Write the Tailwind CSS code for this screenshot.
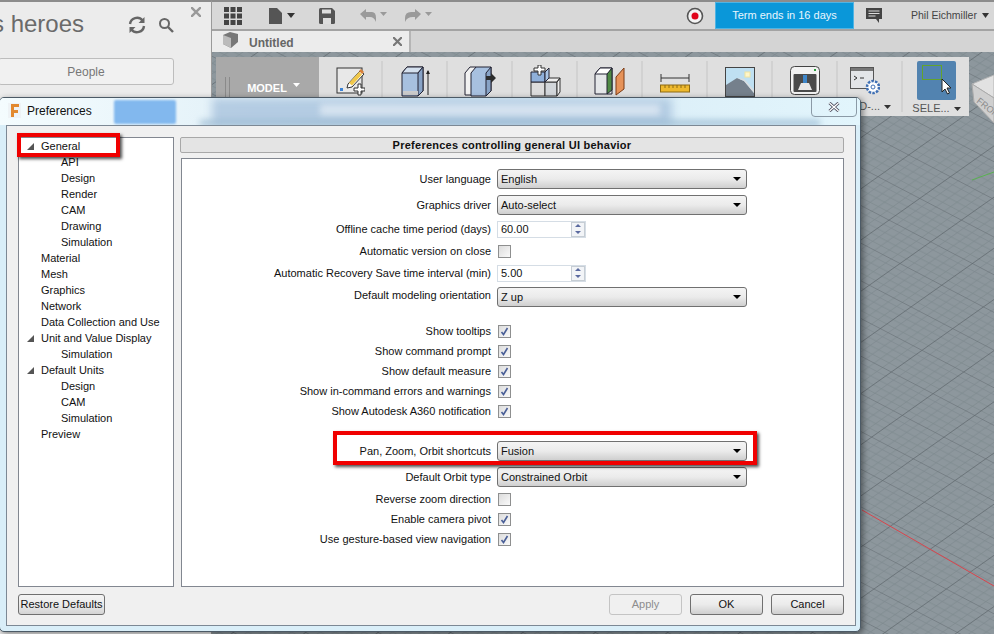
<!DOCTYPE html>
<html lang="en">

<head>
    <meta charset="UTF-8" />
    <title>Preferences</title>
    <script src="https://cdn.jsdelivr.net/npm/@tailwindcss/browser@4"></script>
</head>

<body class="m-0 overflow-hidden font-['Liberation_Sans',Arial,sans-serif]">
    <div class="relative w-[994px] h-[634px] overflow-hidden flex bg-[#8d979d]">

        <!-- Left data panel -->
        <div class="w-[212px] h-full bg-[#ececec] border-t-2 border-[#8c8c8c] border-r border-r-[#9a9a9a] shrink-0 overflow-hidden">
            <div class="h-[56px] flex items-center relative">
                <span class="ml-[-8px] mt-[-13px] text-[24px] leading-none text-[#6a6a6a] whitespace-nowrap w-[134px] shrink-0">s heroes</span>
                <svg class="mt-[-10px] w-[18px] h-[18px] ml-[2px]" viewBox="0 0 18 18" fill="none" stroke="#666" stroke-width="2.4">
                    <path d="M2 8 A7 7 0 0 1 14.5 4.5" />
                    <path d="M16 10 A7 7 0 0 1 3.5 13.5" />
                    <path d="M16.5 1v6h-6z M1.5 17v-6h6z" fill="#666" stroke="none" />
                </svg>
                <svg class="mt-[-10px] w-[16px] h-[16px] ml-[12px]" viewBox="0 0 16 16" fill="none" stroke="#666" stroke-width="2">
                    <circle cx="6.5" cy="6.5" r="4.5" />
                    <path d="M10 10l5 5" stroke-width="2.4" />
                </svg>
                <svg class="absolute left-[191px] top-[5px] w-[10px] h-[10px]" viewBox="0 0 10 10" stroke="#999" stroke-width="2.4">
                    <path d="M0 0l10 10M10 0L0 10" />
                </svg>
            </div>
            <div class="ml-[-2px] w-[176px] h-[27px] bg-[#f1f1f1] border border-[#bdbdbd] rounded-[3px] flex items-center justify-center text-[12px] text-[#777]">People</div>
        </div>

        <!-- App area -->
        <div class="relative flex-1 flex flex-col">
            <!-- Top bar -->
            <div class="h-[31px] bg-[#d8d8d8] border-t-2 border-t-[#8c8c8c] border-b-2 border-b-[#a3a3a3] flex items-center shrink-0">
                <svg class="ml-[12px] w-[18px] h-[18px]" viewBox="0 0 18 18" fill="#444">
                    <path d="M0 0h5v5H0zM6.500 0h5v5h-5zM13 0h5v5h-5zM0 6.500h5v5H0zM6.500 6.500h5v5h-5zM13 6.500h5v5h-5zM0 13h5v5H0zM6.500 13h5v5h-5zM13 13h5v5h-5z" />
                </svg>
                <svg class="ml-[27px] w-[26px] h-[16px]" viewBox="0 0 26 16" fill="#555">
                    <path d="M0 0h8l5 5v11H0z" />
                    <path d="M18 5h8l-4 5z" fill="#333" />
                </svg>
                <svg class="ml-[24px] w-[16px] h-[16px]" viewBox="0 0 16 16" fill="#555">
                    <path d="M0 1.500Q0 0 1.500 0H13l3 3v11.500Q16 16 14.500 16h-13Q0 16 0 14.500z" />
                    <path d="M3 1.500h9v4H3z" fill="#ddd" />
                    <path d="M4 10h8v6H4z" fill="#ddd" />
                </svg>
                <svg class="ml-[25px] w-[28px] h-[14px]" viewBox="0 0 28 14" fill="#9a9a9a">
                    <path d="M0 5l6-5v3h6q4 0 4 6v4q-2-5-6-5H6v3z" />
                    <path d="M20 3h7l-3.500 4z" />
                </svg>
                <svg class="ml-[17px] w-[28px] h-[14px]" viewBox="0 0 28 14" fill="#9a9a9a">
                    <path d="M16 5l-6-5v3H6Q0 3 0 9v4q2-5 8-5h2v3z" />
                    <path d="M20 3h7l-3.500 4z" />
                </svg>
                <svg class="ml-[253px] w-[18px] h-[18px]" viewBox="0 0 18 18">
                    <circle cx="9" cy="9" r="7.500" fill="#f4f4f4" stroke="#555" stroke-width="1.600" />
                    <circle cx="9" cy="9" r="3.500" fill="#e0051b" />
                </svg>
                <div class="ml-[11px] w-[139px] h-full bg-[#0a97d9] border border-[#4fb4e4] flex items-center justify-center text-[11px] text-[#e8f6fd]">Term ends in 16 days</div>
                <svg class="ml-[12px] w-[16px] h-[15px]" viewBox="0 0 16 15" fill="#444">
                    <path d="M0 0h16v11h-3l0 4-3-4H0z" />
                    <path d="M2.500 3h11M2.500 5.500h11M2.500 8h7" stroke="#ddd" stroke-width="1" />
                </svg>
                <span class="ml-[29px] text-[10.500px] text-[#444] whitespace-nowrap">Phil Eichmiller</span>
                <svg class="ml-[5px] w-[7px] h-[5px]" viewBox="0 0 7 5" fill="#333"><path d="M0 0h7L3.500 5z" /></svg>
            </div>

            <!-- Tab row -->
            <div class="h-[21px] bg-[#d4d4d4] shrink-0 flex">
                <div class="w-[199px] bg-[#ececec] border-r-2 border-[#b5b5b5] flex items-center pl-[10px] relative">
                    <svg class="w-[17px] h-[16px] mt-[-4px]" viewBox="0 0 17 16">
                        <path d="M1 3l7-3 8 2v8l-7 6-8-4z" fill="#777" />
                        <path d="M1 3l8 3v10l-8-4z" fill="#bbb" />
                    </svg>
                    <span class="ml-[10px] mt-[3px] text-[12px] font-semibold text-[#666]">Untitled</span>
                    <svg class="absolute right-[7px] top-[6px] w-[9px] h-[9px]" viewBox="0 0 9 9" stroke="#777" stroke-width="2.200">
                        <path d="M0 0l9 9M9 0L0 9" />
                    </svg>
                </div>
            </div>

            <!-- Canvas -->
            <div class="relative flex-1 overflow-hidden bg-[#8d979d]">
                <svg class="absolute left-[-212px] top-[-52px] w-[994px] h-[634px]" viewBox="0 0 994 634">
                    <defs>
                        <pattern id="grid" width="50" height="50" patternUnits="userSpaceOnUse" patternTransform="matrix(0.834 0.434 -0.614 0.434 913.300 458.300)">
                            <path d="M10 0v50M20 0v50M30 0v50M40 0v50M0 10h50M0 20h50M0 30h50M0 40h50" stroke="#7e898f" stroke-width="0.900" fill="none" />
                            <path d="M0 0v50M0 0h50" stroke="#5f686d" stroke-width="1.500" fill="none" />
                        </pattern>
                    </defs>
                    <rect width="994" height="634" fill="url(#grid)" />
                    <path d="M862 510L994 586" stroke="#d9444c" stroke-width="1" />
                    <path d="M972 180L994 172" stroke="#58b24f" stroke-width="1" />
                    <!-- view cube -->
                    <path d="M994 75L972 84L994 98z" fill="#e2e2e2" stroke="#b5b5b5" />
                    <path d="M972 84L994 98V123L974 102z" fill="#cfcfcf" stroke="#aaa" />
                    <text x="976" y="102" font-size="9" fill="#8a8a8a" transform="rotate(38 976 102)">FRONT</text>
                </svg>

                <!-- Ribbon -->
                <div class="absolute left-[4px] top-[5px] w-[753px] h-[59px] bg-[#dfdfdf] flex">
                    <div class="w-[103px] bg-[#a9a9a9] relative flex items-start justify-center pt-[23px] text-[11px] font-bold text-white shrink-0">
                        <span class="absolute left-[9px] top-[20px] w-[1px] h-[30px] bg-[#8a8a8a]"></span>
                        <span class="absolute left-[13px] top-[20px] w-[1px] h-[30px] bg-[#8a8a8a]"></span>
                        <span class="ml-[12px]">MODEL</span>
                        <svg class="ml-[6px] mt-[3px] w-[7px] h-[4px]" viewBox="0 0 7 4" fill="#fff"><path d="M0 0h7L3.500 4z" /></svg>
                    </div>

                    <!-- Sketch -->
                    <div class="w-[64px] border-r-2 border-[#d2d2d2] my-[4px] flex justify-center shrink-0">
                        <svg class="w-[30px] h-[30px] mt-[5px]" viewBox="0 0 30 30">
                            <rect x="2" y="2" width="25" height="25" fill="#e8e8e8" stroke="#333" />
                            <rect x="5" y="22" width="3" height="3" fill="#3c83d6" />
                            <path d="M13 18l12-13 4 3-12 13-5 1z" fill="#fff" stroke="#333" />
                            <path d="M14 17l10-11 3 2.500-10 11z" fill="#f1c84a" />
                            <path d="M24 5l2-2 3 3-2 2z" fill="#d9813a" />
                            <path d="M19 22h4v-4h3v4h4v3h-4v4h-3v-4h-4z" fill="#fff" stroke="#333" />
                        </svg>
                    </div>
                    <!-- Extrude -->
                    <div class="w-[65px] border-r-2 border-[#d2d2d2] my-[4px] flex justify-center shrink-0">
                        <svg class="w-[30px] h-[32px] mt-[4px]" viewBox="0 0 30 32">
                            <path d="M2 8l5-6h16v24l-5 5H2z" fill="#a7c0df" stroke="#223" />
                            <path d="M2 8l5-6h16l-5 6z" fill="#d4e0ee" stroke="#223" />
                            <path d="M18 8l5-6v24l-5 5z" fill="#88a3c6" stroke="#223" />
                            <path d="M3 26h15v4H3z" fill="#ccc" />
                            <path d="M28 30V6" stroke="#222" />
                            <path d="M26 9l2-4 2 4z" fill="#222" />
                        </svg>
                    </div>
                    <!-- Press pull -->
                    <div class="w-[65px] border-r-2 border-[#d2d2d2] my-[4px] flex justify-center shrink-0">
                        <svg class="w-[32px] h-[32px] mt-[4px]" viewBox="0 0 32 32">
                            <path d="M1 8l5-6h6v28H1z" fill="#f1f1f1" stroke="#223" />
                            <path d="M7 8l5-6h15v24l-5 5H7z" fill="#a7c0df" stroke="#223" />
                            <path d="M22 8l5-6v24l-5 5z" fill="#88a3c6" stroke="#223" />
                            <path d="M22 11h5V8l5 5-5 5v-3h-5z" fill="#2c2c2c" />
                        </svg>
                    </div>
                    <!-- Combine -->
                    <div class="w-[65px] border-r-2 border-[#d2d2d2] my-[4px] flex justify-center shrink-0">
                        <svg class="w-[32px] h-[32px] mt-[4px]" viewBox="0 0 32 32">
                            <path d="M2 17h14v14H2z" fill="#dcdcdc" stroke="#333" />
                            <path d="M16 17h12v14H16z" fill="#d2d6da" stroke="#333" />
                            <path d="M16 17l4-4h11l-3 4zM28 17l3-4v14l-3 4z" fill="#eee" stroke="#333" />
                            <path d="M2 7h14v10H2z" fill="#8fb0da" stroke="#223" />
                            <path d="M16 7l4-4v10l-4 4z" fill="#a9c4e4" stroke="#223" />
                            <path d="M5 3h4V0h3v3h4v3h-4v4H9V6H5z" fill="#fff" stroke="#333" />
                        </svg>
                    </div>
                    <!-- Plane -->
                    <div class="w-[65px] border-r-2 border-[#d2d2d2] my-[4px] flex justify-center shrink-0">
                        <svg class="w-[32px] h-[32px] mt-[4px]" viewBox="0 0 32 32">
                            <path d="M1 9l5-6h12v26H1z" fill="#e4e6e8" stroke="#223" />
                            <path d="M1 9l5-6h12l-4 6z" fill="#fff" stroke="#223" />
                            <path d="M13 9l5-6v22l-5 4z" fill="#4f8a45" stroke="#223" />
                            <path d="M22 12l8-9v21l-8 6z" fill="#e69258" stroke="#7c3b14" />
                        </svg>
                    </div>
                    <!-- Inspect -->
                    <div class="w-[65px] border-r-2 border-[#d2d2d2] my-[4px] flex justify-center shrink-0">
                        <svg class="w-[30px] h-[20px] mt-[12px]" viewBox="0 0 30 20">
                            <path d="M1 5h28M1 1v8M29 1v8" stroke="#333" fill="none" />
                            <rect x="0.500" y="12" width="29" height="7" fill="#eeb92e" stroke="#8d6a12" />
                            <path d="M5 12v3M9 12v3M13 12v3M17 12v3M21 12v3M25 12v3" stroke="#8d6a12" />
                        </svg>
                    </div>
                    <!-- Render -->
                    <div class="w-[65px] border-r-2 border-[#d2d2d2] my-[4px] flex justify-center shrink-0">
                        <svg class="w-[30px] h-[30px] mt-[6px]" viewBox="0 0 30 30">
                            <rect x="0.500" y="0.500" width="29" height="29" fill="#bfe0f2" stroke="#444" />
                            <path d="M1 29V18l11-7 7 3 10 12v3z" fill="#75808c" />
                            <path d="M12 11l7 3 10 12v-3L19 12z" fill="#d9dde0" />
                            <rect x="20" y="5" width="5" height="5" fill="#fff6c9" stroke="#f0e3a0" />
                        </svg>
                    </div>
                    <!-- Make -->
                    <div class="w-[65px] border-r-2 border-[#d2d2d2] my-[4px] flex justify-center shrink-0">
                        <svg class="w-[30px] h-[30px] mt-[5px]" viewBox="0 0 30 30">
                            <rect x="0.500" y="0.500" width="29" height="28" rx="4" fill="#f2f2f2" stroke="#444" />
                            <rect x="3.500" y="8" width="23" height="18" rx="1" fill="#4a4a4a" />
                            <path d="M8 24l3-7h8l3 7z" fill="#e8e8e8" />
                            <rect x="13" y="9" width="4" height="8" fill="#3e86c9" />
                            <rect x="24" y="3" width="2" height="2" fill="#2a9a3c" />
                        </svg>
                    </div>
                    <!-- Add-ins -->
                    <div class="w-[65px] border-r-2 border-[#d2d2d2] my-[4px] flex flex-col items-end pr-[10px] shrink-0">
                        <svg class="self-center w-[30px] h-[28px] mt-[6px]" viewBox="0 0 30 28">
                            <rect x="0.500" y="0.500" width="23" height="21" fill="#e3e5e8" stroke="#555" />
                            <rect x="1" y="1" width="22" height="3" fill="#777" />
                            <path d="M4 9l3 2-3 2M10 11h4" stroke="#333" fill="none" />
                            <circle cx="23" cy="20" r="6" fill="#fff" stroke="#3e6fb4" stroke-width="2.500" stroke-dasharray="2.500 1.200" />
                            <circle cx="23" cy="20" r="2" fill="#fff" stroke="#3e6fb4" />
                        </svg>
                        <div class="flex items-center mt-[6px] text-[11px] text-[#555] leading-none whitespace-nowrap">ADD-...
                            <svg class="ml-[4px] w-[7px] h-[4px]" viewBox="0 0 7 4" fill="#333"><path d="M0 0h7L3.500 4z" /></svg>
                        </div>
                    </div>
                    <!-- Select -->
                    <div class="w-[65px] flex flex-col items-center pl-[2px] shrink-0">
                        <div class="relative mt-[4px] w-[39px] h-[39px] bg-[#5283b0] rounded-[2px]">
                            <span class="absolute left-[5px] top-[4px] w-[20px] h-[15px] border border-[#63a32d]"></span>
                            <svg class="absolute left-[24px] top-[17px] w-[11px] h-[17px]" viewBox="0 0 11 17">
                                <path d="M1 1v13l3-3 2.500 5 2-1-2.500-5h4z" fill="#fff" stroke="#222" />
                            </svg>
                        </div>
                        <div class="flex items-center mt-[3px] text-[11px] text-[#555] leading-none">SELE...
                            <svg class="ml-[4px] w-[7px] h-[4px]" viewBox="0 0 7 4" fill="#333"><path d="M0 0h7L3.500 4z" /></svg>
                        </div>
                    </div>
                </div>
            </div>
        </div>

        <!-- Preferences dialog -->
        <div class="absolute left-[-1px] top-[97px] w-[862px] h-[535px] rounded-[5px] border border-[#4c5a66] overflow-hidden bg-[#d9eef8] shadow-[2px_2px_6px_rgba(0,0,0,0.45)] flex flex-col">
            <!-- glass title bar -->
            <div class="relative h-[27px] shrink-0 bg-linear-to-r from-[#f4fcfe] via-[#d6e9f4] to-[#e2f5fc] overflow-hidden">
                <div class="absolute left-[212px] top-[0px] w-[460px] h-[27px] bg-[#a9c3dd]/80 blur-[4px]"></div>
                <div class="absolute left-[320px] top-[6px] w-[340px] h-[12px] bg-[#e4edf5]/70 blur-[3px]"></div>
                <div class="absolute left-[200px] top-[22px] w-[620px] h-[6px] bg-[#8fb0cc]/70 blur-[3px]"></div>
                <div class="absolute left-[114px] top-[2px] w-[62px] h-[24px] bg-[#82b8ee] rounded-[2px] blur-[1px]"></div>
                <div class="relative h-full flex items-center pl-[8px] pb-[2px]">
                    <svg class="w-[13px] h-[15px]" viewBox="0 0 13 15">
                        <rect width="13" height="15" fill="#eef3f6" />
                        <path d="M3 1h8v3H6v3h4v3H6v4H3z" fill="#e2892f" />
                    </svg>
                    <span class="ml-[6px] text-[12px] text-[#111]">Preferences</span>
                </div>
                <div class="absolute left-[811px] top-[-1px] w-[46px] h-[20px] border border-[#8b9aa6] rounded-b-[4px] flex items-center justify-center">
                    <svg class="w-[12px] h-[10px]" viewBox="0 0 12 10" fill="none">
                        <path d="M1.500 1l9 8M10.500 1l-9 8" stroke="#445" stroke-width="3" />
                        <path d="M1.500 1l9 8M10.500 1l-9 8" stroke="#fff" stroke-width="1.400" />
                    </svg>
                </div>
            </div>

            <!-- dialog body -->
            <div class="ml-[6px] mr-[4px] h-[501px] bg-[#f0f0f0] border border-[#7c8894] px-[11px] pt-[11px] flex flex-col shrink-0">
                <div class="flex gap-[6px] h-[450px]">
                    <!-- tree -->
                    <div class="w-[156px] bg-white border border-[#828790] text-[11px] text-[#111] shrink-0">
                        <div class="h-[16px] flex items-center pl-[8px]"><span class="w-0 h-0 border-l-[7px] border-l-transparent border-b-[7px] border-b-[#555]"></span><span class="ml-[7px]">General</span></div>
                        <div class="h-[16px] flex items-center pl-[42px]">API</div>
                        <div class="h-[16px] flex items-center pl-[42px]">Design</div>
                        <div class="h-[16px] flex items-center pl-[42px]">Render</div>
                        <div class="h-[16px] flex items-center pl-[42px]">CAM</div>
                        <div class="h-[16px] flex items-center pl-[42px]">Drawing</div>
                        <div class="h-[16px] flex items-center pl-[42px]">Simulation</div>
                        <div class="h-[16px] flex items-center pl-[22px]">Material</div>
                        <div class="h-[16px] flex items-center pl-[22px]">Mesh</div>
                        <div class="h-[16px] flex items-center pl-[22px]">Graphics</div>
                        <div class="h-[16px] flex items-center pl-[22px]">Network</div>
                        <div class="h-[16px] flex items-center pl-[22px]">Data Collection and Use</div>
                        <div class="h-[16px] flex items-center pl-[8px]"><span class="w-0 h-0 border-l-[7px] border-l-transparent border-b-[7px] border-b-[#555]"></span><span class="ml-[7px]">Unit and Value Display</span></div>
                        <div class="h-[16px] flex items-center pl-[42px]">Simulation</div>
                        <div class="h-[16px] flex items-center pl-[8px]"><span class="w-0 h-0 border-l-[7px] border-l-transparent border-b-[7px] border-b-[#555]"></span><span class="ml-[7px]">Default Units</span></div>
                        <div class="h-[16px] flex items-center pl-[42px]">Design</div>
                        <div class="h-[16px] flex items-center pl-[42px]">CAM</div>
                        <div class="h-[16px] flex items-center pl-[42px]">Simulation</div>
                        <div class="h-[16px] flex items-center pl-[22px]">Preview</div>
                    </div>

                    <!-- settings -->
                    <div class="w-[665px] flex flex-col">
                        <div class="h-[16px] bg-[#e4e4e4] border border-[#a8a8a8] rounded-[2px] flex items-center justify-center text-[11px] font-bold text-[#111] tracking-[0.25px]">Preferences controlling general UI behavior</div>
                        <div class="mt-[5px] flex-1 ml-[1px] bg-white border border-[#828790] flex flex-col text-[11px] text-[#111] pt-[10px] pl-[134px]">

                            <div class="flex items-center h-[20px]">
                                <span class="w-[175px] text-right whitespace-nowrap">User language</span>
                                <div class="ml-[6px] w-[250px] h-[20px] border border-[#707070] rounded-[3px] bg-linear-to-b from-[#f4f4f4] via-[#ebebeb] to-[#cfcfcf] flex items-center justify-between pl-[3px] pr-[5px]">English<span class="w-0 h-0 border-x-[4px] border-x-transparent border-t-[4px] border-t-black"></span></div>
                            </div>
                            <div class="flex items-center h-[20px] mt-[6px]">
                                <span class="w-[175px] text-right whitespace-nowrap">Graphics driver</span>
                                <div class="ml-[6px] w-[250px] h-[20px] border border-[#707070] rounded-[3px] bg-linear-to-b from-[#f4f4f4] via-[#ebebeb] to-[#cfcfcf] flex items-center justify-between pl-[3px] pr-[5px]">Auto-select<span class="w-0 h-0 border-x-[4px] border-x-transparent border-t-[4px] border-t-black"></span></div>
                            </div>
                            <div class="flex items-center h-[20px] mt-[4px]">
                                <span class="w-[175px] text-right whitespace-nowrap">Offline cache time period (days)</span>
                                <div class="ml-[6px] w-[89px] h-[17px] border border-[#d5dde5] flex items-center justify-between pl-[3px]">60.00
                                    <span class="w-[14px] h-[15px] border border-[#c6cdd4] flex flex-col items-center justify-around bg-[#f2f4f7]"><span class="w-0 h-0 border-x-[3px] border-x-transparent border-b-[3px] border-b-[#5b6aa0]"></span><span class="w-0 h-0 border-x-[3px] border-x-transparent border-t-[3px] border-t-[#5b6aa0]"></span></span>
                                </div>
                            </div>
                            <div class="flex items-center h-[20px] mt-[2px]">
                                <span class="w-[175px] text-right whitespace-nowrap">Automatic version on close</span>
                                <span class="ml-[7px] w-[13px] h-[13px] border border-[#8e8f8f] bg-linear-to-br from-[#dcdcdc] to-[#fafafa]"></span>
                            </div>
                            <div class="flex items-center h-[20px] mt-[2px]">
                                <span class="w-[175px] text-right whitespace-nowrap flex justify-end">Automatic Recovery Save time interval (min)</span>
                                <div class="ml-[6px] w-[89px] h-[17px] border border-[#d5dde5] flex items-center justify-between pl-[3px]">5.00
                                    <span class="w-[14px] h-[15px] border border-[#c6cdd4] flex flex-col items-center justify-around bg-[#f2f4f7]"><span class="w-0 h-0 border-x-[3px] border-x-transparent border-b-[3px] border-b-[#5b6aa0]"></span><span class="w-0 h-0 border-x-[3px] border-x-transparent border-t-[3px] border-t-[#5b6aa0]"></span></span>
                                </div>
                            </div>
                            <div class="flex items-center h-[20px] mt-[4px]">
                                <span class="w-[175px] text-right whitespace-nowrap mt-[-3px]">Default modeling orientation</span>
                                <div class="ml-[6px] w-[250px] h-[20px] border border-[#707070] rounded-[3px] bg-linear-to-b from-[#f4f4f4] via-[#ebebeb] to-[#cfcfcf] flex items-center justify-between pl-[3px] pr-[5px]">Z up<span class="w-0 h-0 border-x-[4px] border-x-transparent border-t-[4px] border-t-black"></span></div>
                            </div>

                            <div class="flex items-center h-[20px] mt-[14px]">
                                <span class="w-[175px] text-right whitespace-nowrap">Show tooltips</span>
                                <span class="ml-[7px] w-[13px] h-[13px] border border-[#8e8f8f] bg-linear-to-br from-[#dcdcdc] to-[#fafafa] flex items-center justify-center"><svg class="w-[9px] h-[9px]" viewBox="0 0 9 9"><path d="M1.500 5l2 2.500L7.500 1" fill="none" stroke="#4a5f97" stroke-width="1.600" /></svg></span>
                            </div>
                            <div class="flex items-center h-[20px]">
                                <span class="w-[175px] text-right whitespace-nowrap">Show command prompt</span>
                                <span class="ml-[7px] w-[13px] h-[13px] border border-[#8e8f8f] bg-linear-to-br from-[#dcdcdc] to-[#fafafa] flex items-center justify-center"><svg class="w-[9px] h-[9px]" viewBox="0 0 9 9"><path d="M1.500 5l2 2.500L7.500 1" fill="none" stroke="#4a5f97" stroke-width="1.600" /></svg></span>
                            </div>
                            <div class="flex items-center h-[20px]">
                                <span class="w-[175px] text-right whitespace-nowrap">Show default measure</span>
                                <span class="ml-[7px] w-[13px] h-[13px] border border-[#8e8f8f] bg-linear-to-br from-[#dcdcdc] to-[#fafafa] flex items-center justify-center"><svg class="w-[9px] h-[9px]" viewBox="0 0 9 9"><path d="M1.500 5l2 2.500L7.500 1" fill="none" stroke="#4a5f97" stroke-width="1.600" /></svg></span>
                            </div>
                            <div class="flex items-center h-[20px]">
                                <span class="w-[175px] text-right whitespace-nowrap flex justify-end">Show in-command errors and warnings</span>
                                <span class="ml-[7px] w-[13px] h-[13px] border border-[#8e8f8f] bg-linear-to-br from-[#dcdcdc] to-[#fafafa] flex items-center justify-center"><svg class="w-[9px] h-[9px]" viewBox="0 0 9 9"><path d="M1.500 5l2 2.500L7.500 1" fill="none" stroke="#4a5f97" stroke-width="1.600" /></svg></span>
                            </div>
                            <div class="flex items-center h-[20px]">
                                <span class="w-[175px] text-right whitespace-nowrap">Show Autodesk A360 notification</span>
                                <span class="ml-[7px] w-[13px] h-[13px] border border-[#8e8f8f] bg-linear-to-br from-[#dcdcdc] to-[#fafafa] flex items-center justify-center"><svg class="w-[9px] h-[9px]" viewBox="0 0 9 9"><path d="M1.500 5l2 2.500L7.500 1" fill="none" stroke="#4a5f97" stroke-width="1.600" /></svg></span>
                            </div>

                            <div class="flex items-center h-[20px] mt-[20px]">
                                <span class="w-[175px] text-right whitespace-nowrap">Pan, Zoom, Orbit shortcuts</span>
                                <div class="ml-[6px] w-[250px] h-[20px] border border-[#707070] rounded-[3px] bg-linear-to-b from-[#f4f4f4] via-[#ebebeb] to-[#cfcfcf] flex items-center justify-between pl-[3px] pr-[5px]">Fusion<span class="w-0 h-0 border-x-[4px] border-x-transparent border-t-[4px] border-t-black"></span></div>
                            </div>
                            <div class="flex items-center h-[20px] mt-[6px]">
                                <span class="w-[175px] text-right whitespace-nowrap">Default Orbit type</span>
                                <div class="ml-[6px] w-[250px] h-[20px] border border-[#707070] rounded-[3px] bg-linear-to-b from-[#f4f4f4] via-[#ebebeb] to-[#cfcfcf] flex items-center justify-between pl-[3px] pr-[5px]">Constrained Orbit<span class="w-0 h-0 border-x-[4px] border-x-transparent border-t-[4px] border-t-black"></span></div>
                            </div>
                            <div class="flex items-center h-[20px] mt-[2px]">
                                <span class="w-[175px] text-right whitespace-nowrap">Reverse zoom direction</span>
                                <span class="ml-[7px] w-[13px] h-[13px] border border-[#8e8f8f] bg-linear-to-br from-[#dcdcdc] to-[#fafafa]"></span>
                            </div>
                            <div class="flex items-center h-[20px]">
                                <span class="w-[175px] text-right whitespace-nowrap">Enable camera pivot</span>
                                <span class="ml-[7px] w-[13px] h-[13px] border border-[#8e8f8f] bg-linear-to-br from-[#dcdcdc] to-[#fafafa] flex items-center justify-center"><svg class="w-[9px] h-[9px]" viewBox="0 0 9 9"><path d="M1.500 5l2 2.500L7.500 1" fill="none" stroke="#4a5f97" stroke-width="1.600" /></svg></span>
                            </div>
                            <div class="flex items-center h-[20px]">
                                <span class="w-[175px] text-right whitespace-nowrap flex justify-end">Use gesture-based view navigation</span>
                                <span class="ml-[7px] w-[13px] h-[13px] border border-[#8e8f8f] bg-linear-to-br from-[#dcdcdc] to-[#fafafa] flex items-center justify-center"><svg class="w-[9px] h-[9px]" viewBox="0 0 9 9"><path d="M1.500 5l2 2.500L7.500 1" fill="none" stroke="#4a5f97" stroke-width="1.600" /></svg></span>
                            </div>
                        </div>
                    </div>
                </div>

                <!-- footer -->
                <div class="mt-[7px] flex items-center text-[11px] text-[#111]">
                    <div class="w-[87px] h-[21px] border border-[#707070] rounded-[3px] bg-linear-to-b from-[#f4f4f4] via-[#ebebeb] to-[#d4d4d4] flex items-center justify-center">Restore Defaults</div>
                    <div class="ml-auto w-[73px] h-[21px] border border-[#c4c4c4] rounded-[3px] bg-[#f0f0f0] flex items-center justify-center text-[#8d8d8d]">Apply</div>
                    <div class="ml-[8px] w-[73px] h-[21px] border border-[#707070] rounded-[3px] bg-linear-to-b from-[#f4f4f4] via-[#ebebeb] to-[#cfcfcf] flex items-center justify-center">OK</div>
                    <div class="ml-[8px] w-[73px] h-[21px] border border-[#707070] rounded-[3px] bg-linear-to-b from-[#f4f4f4] via-[#ebebeb] to-[#cfcfcf] flex items-center justify-center">Cancel</div>
                </div>
            </div>
        </div>

        <!-- Red callouts over the screenshot -->
        <div class="absolute left-[17px] top-[133px] w-[103px] h-[24px] border-[4px] border-[#f00000] shadow-[2px_2px_3px_rgba(0,0,0,0.7)]"></div>
        <div class="absolute left-[333px] top-[431px] w-[424px] h-[34px] border-[4px] border-[#f00000] shadow-[2px_2px_3px_rgba(0,0,0,0.7)]"></div>
    </div>
</body>

</html>
